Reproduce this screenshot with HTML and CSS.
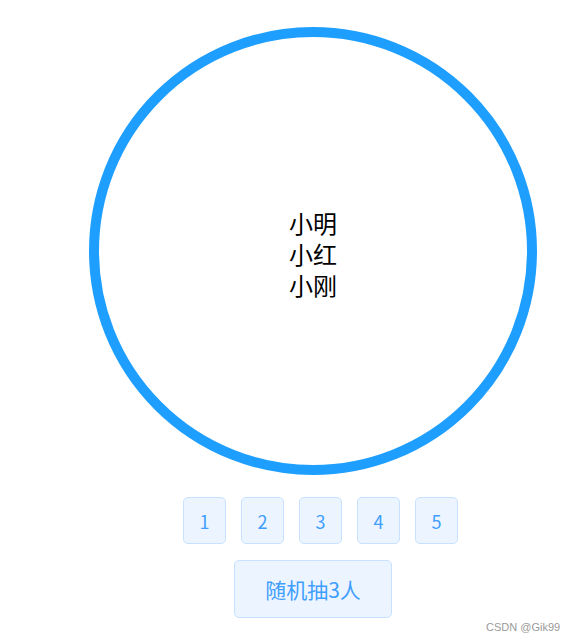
FILE: index.html
```html
<!DOCTYPE html>
<html lang="zh">
<head>
<meta charset="utf-8">
<title>随机抽人</title>
<link rel="stylesheet" href="styles.css">
</head>
<body>
<main class="stage">
  <div class="wheel">
    <div class="names">
      <div>小明</div>
      <div>小红</div>
      <div>小刚</div>
    </div>
  </div>
  <div class="counts">
    <button class="btn num">1</button>
    <button class="btn num">2</button>
    <button class="btn num">3</button>
    <button class="btn num">4</button>
    <button class="btn num">5</button>
  </div>
  <button class="btn draw">随机抽3人</button>
</main>
<div class="mark">CSDN @Gik99</div>
</body>
</html>
```

FILE: styles.css
```css
html, body {
  margin: 0;
  padding: 0;
  background: #ffffff;
}
body {
  width: 571px;
  height: 643px;
  position: relative;
  overflow: hidden;
  font-family: "Noto Sans CJK SC", "Noto Sans", sans-serif;
}
.stage {
  width: 448px;
  margin-left: 89px;
  padding-top: 27px;
  display: flex;
  flex-direction: column;
  align-items: center;
}
.wheel {
  width: 448px;
  height: 448px;
  box-sizing: border-box;
  border: 10px solid #1e9fff;
  border-radius: 50%;
  display: flex;
  align-items: center;
  justify-content: center;
}
.names {
  font-size: 24px;
  line-height: 31px;
  color: #000000;
  text-align: center;
  padding-top: 4px;
}
.counts {
  display: flex;
  margin-top: 22px;
}
.btn {
  font-family: "Noto Sans CJK SC", "Noto Sans", sans-serif;
  background: #ecf5ff;
  border: 1px solid #c6e2ff;
  color: #409eff;
  border-radius: 5px;
  padding: 0;
  cursor: pointer;
  box-sizing: border-box;
}
.num {
  width: 43px;
  height: 47px;
  font-size: 18px;
  margin-left: 15px;
}
.draw {
  margin-top: 16px;
  width: 158px;
  height: 58px;
  font-size: 21px;
}
.mark {
  position: absolute;
  left: 486px;
  top: 621px;
  font-family: "Liberation Sans", Arial, sans-serif;
  font-size: 11px;
  color: #9a9a9a;
}
```
